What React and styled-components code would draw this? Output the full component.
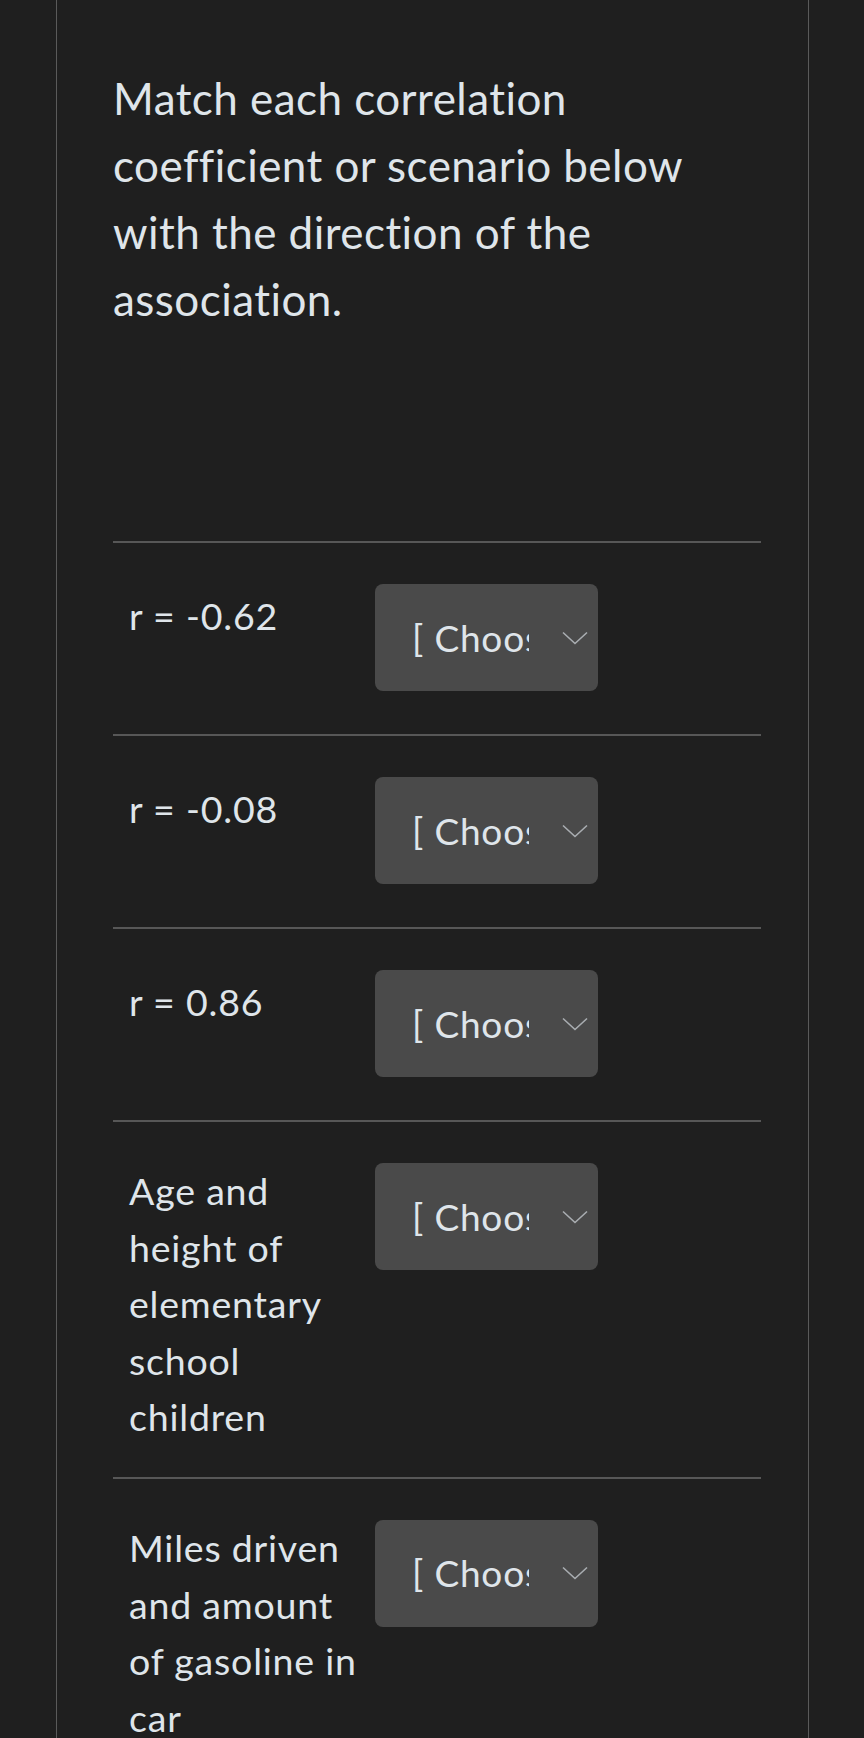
import React from "react";
import styled, { createGlobalStyle } from "styled-components";

const GlobalStyle = createGlobalStyle`
  html, body {
    margin: 0;
    padding: 0;
    background: #1f1f1f;
  }
  body {
    font-family: Lato, "Open Sans", "Liberation Sans", sans-serif;
    color: #dfe5ea;
  }
`;

const Page = styled.div`
  min-height: 1738px;
  padding: 0 55px 0 56px;
`;

const Panel = styled.div`
  min-height: 1738px;
  border-left: 1px solid #5a5a5a;
  border-right: 1px solid #5a5a5a;
  padding: 65px 47px 0 56px;
  box-sizing: border-box;
`;

const Question = styled.p`
  margin: 0 0 208px;
  font-size: 44px;
  letter-spacing: 0.45px;
  line-height: 67px;
  font-weight: 400;
  color: #dfe5ea;
`;

const Row = styled.div`
  display: flex;
  align-items: flex-start;
  border-top: 2px solid #575757;
  padding: 41px 0 31px;
`;

const Label = styled.div`
  width: 236px;
  padding-left: 16px;
  margin-right: 10px;
  font-size: 37.5px;
  letter-spacing: 0.8px;
  line-height: 56.6px;
  color: #dfe5ea;
  padding-top: ${(p) => (p.$offset ? p.$offset : 0)}px;
`;

const Select = styled.div`
  flex: none;
  width: 223px;
  height: 107px;
  margin-bottom: 12px;
  box-sizing: border-box;
  background: #4a4a4a;
  border-radius: 8px;
  display: flex;
  align-items: center;
  padding-left: 37px;
`;

const SelectText = styled.span`
  width: 117px;
  overflow: hidden;
  white-space: nowrap;
  font-size: 37px;
  letter-spacing: 0.8px;
  line-height: 44px;
  color: #dfe5ea;
`;

const Chevron = styled.svg`
  margin-left: 33px;
  width: 26px;
  height: 14px;
`;

const items = [
  { label: "r = -0.62", offset: 4 },
  { label: "r = -0.08", offset: 4 },
  { label: "r = 0.86", offset: 4 },
  { label: "Age and height of elementary school children" },
  { label: "Miles driven and amount of gasoline in car" },
];

const App = () => (
  <>
    <GlobalStyle />
    <Page>
      <Panel>
        <Question>
          Match each correlation coefficient or scenario below with the
          direction of the association.
        </Question>
        {items.map((item) => (
          <Row key={item.label}>
            <Label $offset={item.offset}>{item.label}</Label>
            <Select>
              <SelectText>[ Choose ]</SelectText>
              <Chevron viewBox="0 0 26 14" fill="none">
                <path
                  d="M1 1.5 L13 12.5 L25 1.5"
                  stroke="#a9adb1"
                  strokeWidth="1.6"
                />
              </Chevron>
            </Select>
          </Row>
        ))}
      </Panel>
    </Page>
  </>
);

export default App;
